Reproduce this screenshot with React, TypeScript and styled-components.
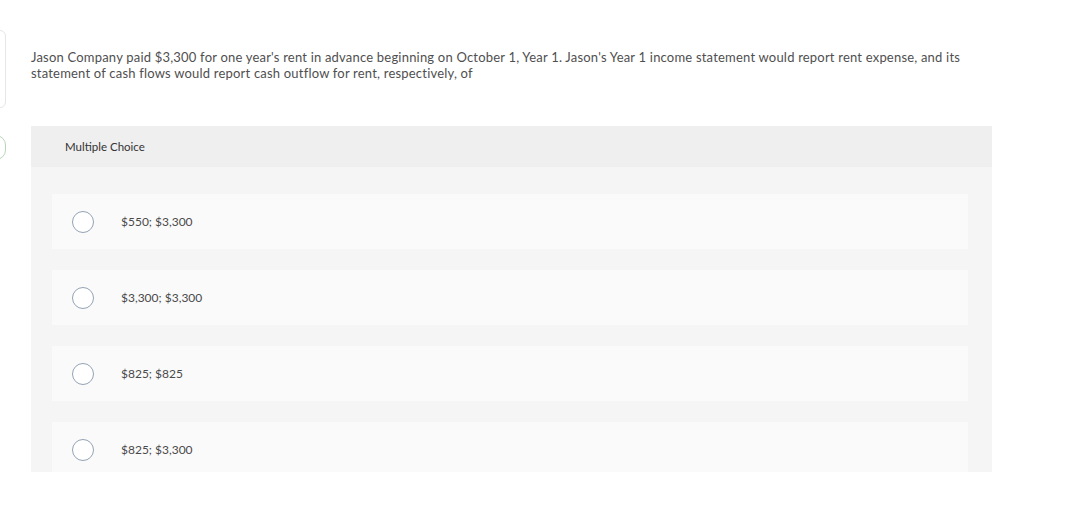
import styled, { createGlobalStyle } from 'styled-components';

const GlobalStyle = createGlobalStyle`
  html, body {
    margin: 0;
    padding: 0;
    background: #ffffff;
    overflow: hidden;
  }
  body {
    font-family: Lato, "Liberation Sans", sans-serif;
    color: #4a4a4a;
  }
`;

const Page = styled.div`
  display: flex;
  width: 1072px;
  height: 517px;
  padding-top: 30px;
  box-sizing: border-box;
  overflow: hidden;
`;

const Rail = styled.div`
  width: 31px;
  flex-shrink: 0;
  display: flex;
  flex-direction: column;
`;

const SideCard = styled.div`
  width: 46px;
  height: 78px;
  margin-left: -40px;
  border: 1px solid #e6e6e6;
  border-radius: 6px;
  box-sizing: border-box;
`;

const SidePill = styled.div`
  width: 30px;
  height: 25px;
  margin-top: 27px;
  margin-left: -24px;
  border: 1px solid #b9d6b9;
  border-radius: 10px;
  box-sizing: border-box;
`;

const Main = styled.div`
  width: 961px;
  display: flex;
  flex-direction: column;
`;

const Question = styled.p`
  margin: 19px 0 0;
  padding-right: 20px;
  font-size: 13px;
  letter-spacing: 0.2px;
  line-height: 16px;
  color: #4f4f4f;
`;

const Panel = styled.section`
  margin-top: 45px;
  height: 346px;
  overflow: hidden;
  background: #f5f5f5;
`;

const PanelHeader = styled.div`
  height: 41px;
  display: flex;
  align-items: center;
  padding-left: 34px;
  background: #efefef;
  font-size: 11.5px;
  color: #333333;
`;

const Choices = styled.div`
  display: flex;
  flex-direction: column;
  gap: 21px;
  padding: 27px 24px 0 21px;
`;

const Choice = styled.label`
  height: 55px;
  flex-shrink: 0;
  display: flex;
  align-items: center;
  gap: 27px;
  padding-left: 20px;
  background: #fafafa;
  font-size: 12px;
  color: #4a4a4a;
  cursor: pointer;
`;

const Radio = styled.span`
  width: 22px;
  height: 22px;
  border-radius: 50%;
  border: 1.5px solid #93a3b5;
  background: #ffffff;
  box-sizing: border-box;
  flex-shrink: 0;
`;

const options = ['$550; $3,300', '$3,300; $3,300', '$825; $825', '$825; $3,300'];

export default function App() {
  return (
    <>
      <GlobalStyle />
      <Page>
        <Rail>
          <SideCard />
          <SidePill />
        </Rail>
        <Main>
          <Question>
            Jason Company paid $3,300 for one year's rent in advance beginning on October 1, Year 1. Jason's Year 1
            income statement would report rent expense, and its statement of cash flows would report cash outflow
            for rent, respectively, of
          </Question>
          <Panel>
            <PanelHeader>Multiple Choice</PanelHeader>
            <Choices>
              {options.map((o) => (
                <Choice key={o}>
                  <Radio />
                  {o}
                </Choice>
              ))}
            </Choices>
          </Panel>
        </Main>
      </Page>
    </>
  );
}
